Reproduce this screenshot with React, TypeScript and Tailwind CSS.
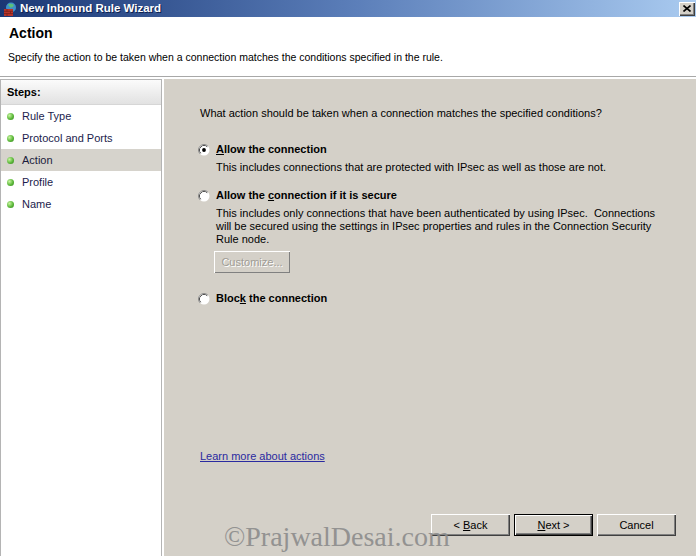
import React from 'react'

function Radio({ checked }: { checked?: boolean }) {
  return (
    <svg width="12" height="12" viewBox="0 0 12 12" className="shrink-0">
      <circle cx="6" cy="6" r="5.5" fill="#ffffff" />
      <path d="M2.11 9.89 A5.5 5.5 0 0 1 9.89 2.11" fill="none" stroke="#8a8a8a" strokeWidth="1" />
      <path d="M2.82 9.18 A4.5 4.5 0 0 1 9.18 2.82" fill="none" stroke="#505050" strokeWidth="1" />
      <circle cx="6" cy="6" r="3.8" fill="#ffffff" />
      {checked && <circle cx="6" cy="6" r="1.9" fill="#000000" />}
    </svg>
  )
}

function Dot() {
  return <span className="w-[7px] h-[7px] rounded-full shrink-0 bg-[radial-gradient(circle_at_35%_35%,#c8f5a0,#5cb83a_55%,#2f7f1a)]" />
}

function WinButton({ children, isDefault }: { children: React.ReactNode; isDefault?: boolean }) {
  return (
    <div
      className={
        isDefault
          ? 'w-[79px] h-[22px] flex items-center justify-center bg-[#d4d0c8] border border-black shadow-[inset_1px_1px_#ffffff,inset_-1px_-1px_#404040,inset_-2px_-2px_#808080]'
          : 'w-[79px] h-[22px] flex items-center justify-center bg-[#d4d0c8] shadow-[inset_1px_1px_#ffffff,inset_-1px_-1px_#404040,inset_-2px_-2px_#808080]'
      }
    >
      {children}
    </div>
  )
}

const steps = ['Rule Type', 'Protocol and Ports', 'Action', 'Profile', 'Name']

export default function App() {
  return (
    <div className="relative w-[696px] h-[556px] overflow-hidden bg-white flex flex-col font-['Liberation_Sans',Arial,sans-serif] text-[11px] leading-[13px] text-black">
      {/* title bar */}
      <div className="h-[17px] shrink-0 flex items-center bg-linear-to-r from-[#1b3774] via-[#5a7db8] to-[#aacbf0]">
        <svg width="14" height="14" viewBox="0 0 14 14" className="ml-[3px]">
          <circle cx="8" cy="5.5" r="5" fill="#3f8fc8" />
          <path d="M5 2.5 Q8 1 11 3 Q10 6 7 5.5 Z" fill="#5ac07a" />
          <rect x="1" y="7" width="9" height="7" fill="#b8342a" />
          <path d="M1 9.3 H10 M1 11.6 H10 M4 7 V9.3 M7.5 9.3 V11.6 M4 11.6 V14" stroke="#7a1f18" strokeWidth="0.8" />
        </svg>
        <span className="ml-[3px] text-white font-bold text-[11.5px] leading-[17px] [text-shadow:1px_1px_0_#0f2250]">New Inbound Rule Wizard</span>
        <div className="ml-auto mr-[1px] w-[16px] h-[14px] flex items-center justify-center bg-[#d4d0c8] shadow-[inset_1px_1px_#ffffff,inset_-1px_-1px_#404040,inset_-2px_-2px_#808080]">
          <svg width="8" height="7" viewBox="0 0 8 7">
            <path d="M0.5 0.5 L7.5 6.5 M7.5 0.5 L0.5 6.5" stroke="#000" strokeWidth="1.6" />
          </svg>
        </div>
      </div>

      {/* header */}
      <div className="h-[60px] shrink-0 border-b border-[#a8a8a8] pl-[9px]">
        <div className="mt-[8px] font-bold text-[14px] leading-[16px]">Action</div>
        <div className="mt-[9px] -ml-[1px] text-[10.5px] leading-[15px]">
          Specify the action to be taken when a connection matches the conditions specified in the rule.
        </div>
      </div>
      <div className="h-[2px] shrink-0" />

      {/* body */}
      <div className="flex-1 flex min-h-0">
        {/* steps */}
        <div className="w-[162px] shrink-0 bg-white border-l border-t border-r border-[#b4b4b4] flex flex-col">
          <div className="h-[25px] border-b border-[#d6d6d6] bg-linear-to-b from-[#fbfbfb] to-[#e2e2e2] pl-[6px] flex items-center font-bold">
            Steps:
          </div>
          {steps.map((s) => (
            <div
              key={s}
              className={
                s === 'Action'
                  ? 'h-[22px] flex items-center pl-[6px] bg-[#d6d3cc] text-[#1c1c3c]'
                  : 'h-[22px] flex items-center pl-[6px] text-[#1c1c4c]'
              }
            >
              <Dot />
              <span className="ml-[8px]">{s}</span>
            </div>
          ))}
        </div>
        <div className="w-[2px] shrink-0" />

        {/* content */}
        <div className="flex-1 bg-[#d4d0c8] flex flex-col pl-[34px]">
          <p className="mt-[28px] ml-[2px]">What action should be taken when a connection matches the specified conditions?</p>

          <div className="mt-[23px] flex">
            <div className="h-[13px] flex items-center">
              <Radio checked />
            </div>
            <div className="ml-[6px]">
              <div className="font-bold">
                <span className="underline">A</span>llow the connection
              </div>
              <div className="mt-[5px]">This includes connections that are protected with IPsec as well as those are not.</div>
            </div>
          </div>

          <div className="mt-[15px] flex">
            <div className="h-[13px] flex items-center">
              <Radio />
            </div>
            <div className="ml-[6px]">
              <div className="font-bold">
                Allow the <span className="underline">c</span>onnection if it is secure
              </div>
              <div className="mt-[5px] whitespace-pre">
                {'This includes only connections that have been authenticated by using IPsec.  Connections\nwill be secured using the settings in IPsec properties and rules in the Connection Security\nRule node.'}
              </div>
              <div className="mt-[5px] -ml-[2px] w-[76px] h-[22px] flex items-center justify-center bg-[#d4d0c8] text-[#a09d96] [text-shadow:1px_1px_0_#ffffff] shadow-[inset_1px_1px_#ffffff,inset_-1px_-1px_#808080]">
                Customize...
              </div>
            </div>
          </div>

          <div className="mt-[19px] flex">
            <div className="h-[13px] flex items-center">
              <Radio />
            </div>
            <div className="ml-[6px] font-bold">
              Bloc<span className="underline">k</span> the connection
            </div>
          </div>

          <a className="mt-[145px] ml-[2px] self-start underline text-[#2a2aa0]">Learn more about actions</a>

          <div className="mt-auto mb-[20px] mr-[20px] flex justify-end gap-[4px]">
            <WinButton>
              &lt; <span className="underline ml-[3px]">B</span>ack
            </WinButton>
            <WinButton isDefault>
              <span className="underline">N</span>ext &gt;
            </WinButton>
            <WinButton>Cancel</WinButton>
          </div>
        </div>
      </div>

      {/* watermark */}
      <div className="absolute left-[224px] top-[523px] pointer-events-none font-['Liberation_Serif',serif] text-[28px] leading-[28px] text-[#8c8c8c] opacity-90">
        ©PrajwalDesai.com
      </div>
    </div>
  )
}
